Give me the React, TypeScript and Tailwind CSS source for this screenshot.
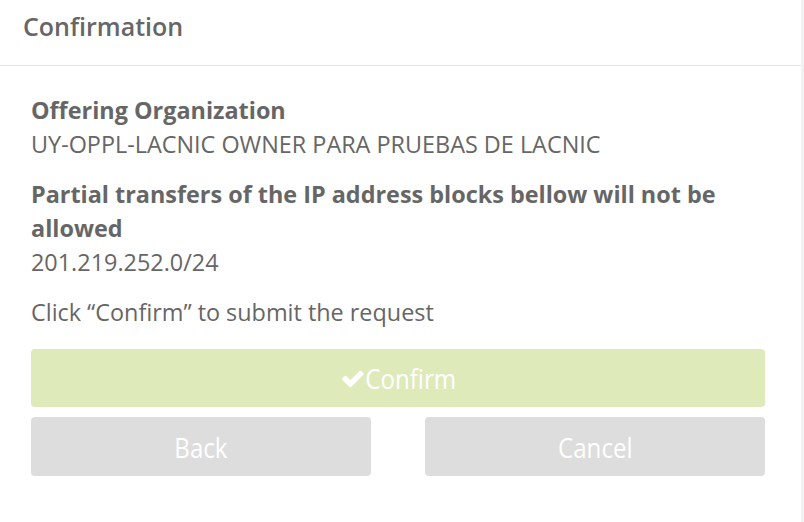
import React from "react";

export default function App() {
  return (
    <div className="flex h-[522px] w-[804px] bg-[#f2f2f2]" style={{ fontFamily: '"Open Sans", sans-serif' }}>
      <div className="flex h-full w-[801px] flex-col bg-white text-[#666666]">
        <div className="h-[66px] border-b border-[#e6e6e6] pl-[23px] pt-[9px]">
          <h1 className="text-[25px] font-semibold leading-[34px]">Confirmation</h1>
        </div>
        <div className="pl-[31px] pr-[36px] pt-[27px]">
          <div className="text-[23.4px] leading-[34px]">
            <div className="font-bold">Offering Organization</div>
            <div>UY-OPPL-LACNIC OWNER PARA PRUEBAS DE LACNIC</div>
          </div>
          <div className="mt-[16px] text-[23.4px] leading-[34px]">
            <div className="font-bold">Partial transfers of the IP address blocks bellow will not be allowed</div>
            <div>201.219.252.0/24</div>
          </div>
          <div className="mt-[16px] text-[23.4px] leading-[34px]">Click “Confirm” to submit the request</div>
          <button className="mt-[20px] flex h-[58px] w-full items-center justify-center rounded-[4px] bg-[#dfeabb] text-[28px] text-white">
            <span className="inline-flex scale-x-[0.86] items-center">
              <svg viewBox="0 0 1792 1792" preserveAspectRatio="none" className="h-[25px] w-[29px]" fill="currentColor">
                <path d="M1671 566q0 40-28 68l-724 724-136 136q-28 28-68 28t-68-28l-136-136-362-362q-28-28-28-68t28-68l136-136q28-28 68-28t68 28l294 295 656-657q28-28 68-28t68 28l136 136q28 28 28 68z" />
              </svg>
              Confirm
            </span>
          </button>
          <div className="mt-[10px] flex justify-between">
            <button className="flex h-[59px] w-[340px] items-center justify-center rounded-[4px] bg-[#dddddd] text-[28px] text-white">
              <span className="inline-block scale-x-[0.86]">Back</span>
            </button>
            <button className="flex h-[59px] w-[340px] items-center justify-center rounded-[4px] bg-[#dddddd] text-[28px] text-white">
              <span className="inline-block scale-x-[0.86]">Cancel</span>
            </button>
          </div>
        </div>
      </div>
    </div>
  );
}
